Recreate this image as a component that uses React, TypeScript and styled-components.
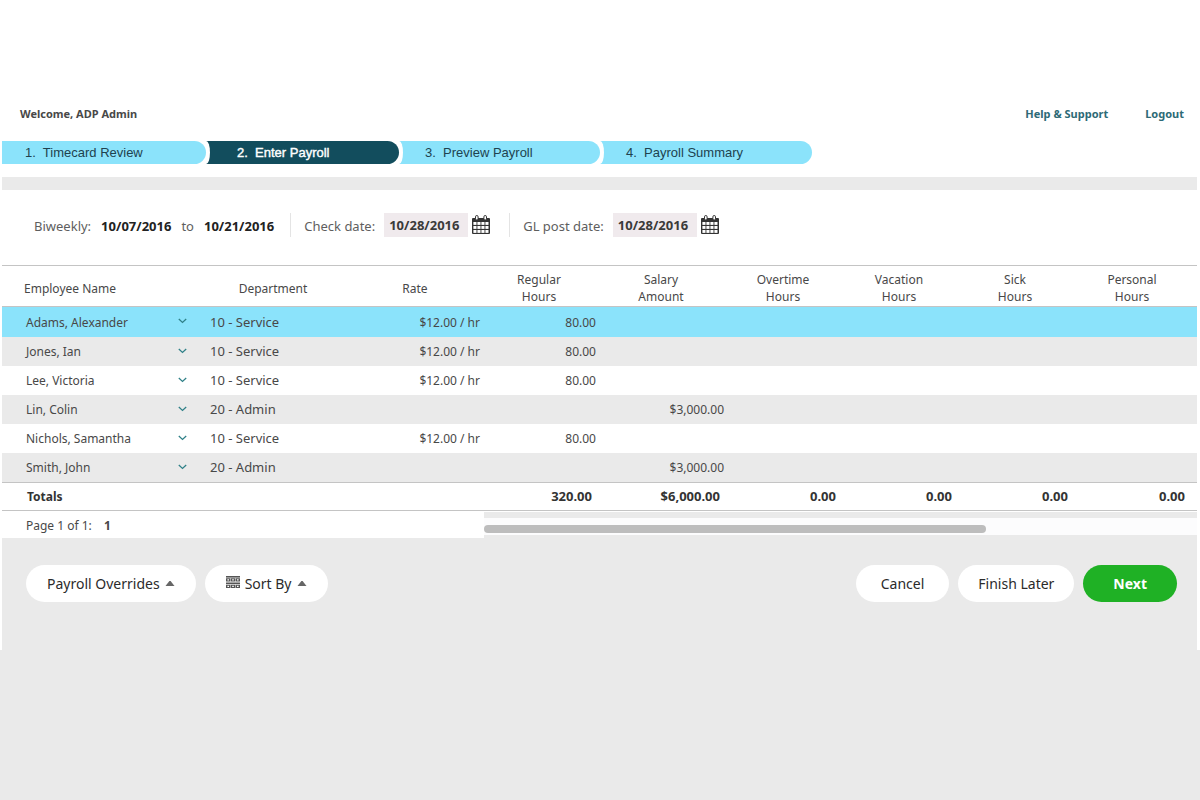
import React, { useState } from "react";
import styled, { createGlobalStyle } from "styled-components";

const color = {
  grey: "#eaeaea",
  cyan: "#8be3fb",
  navy: "#124d5d",
  line: "#c4c4c4",
  text: "#484848",
  link: "#2d6a76",
  green: "#1fb125",
};

const GlobalStyle = createGlobalStyle`
  * { box-sizing: border-box; }
  body {
    margin: 0;
    background: #fff;
    color: ${color.text};
    font-family: "Noto Sans", "Liberation Sans", sans-serif;
    font-size: 12px;
    line-height: 17px;
  }
  button, input { font-family: inherit; }
`;

const Page = styled.div`
  min-height: 100vh;
  display: flex;
  flex-direction: column;
  padding-top: 104px;
`;

const Shell = styled.div`
  margin: 0 3px 0 2px;
`;

const TopBar = styled.header`
  display: flex;
  justify-content: space-between;
  align-items: center;
  height: 19px;
  padding: 0 13px 0 18px;
  font-size: 11px;
  font-weight: 700;
`;

const TopLinks = styled.nav`
  display: flex;
  gap: 37px;
`;

const TopLink = styled.a`
  color: ${color.link};
  text-decoration: none;
`;

const Steps = styled.ol`
  display: flex;
  list-style: none;
  margin: 0;
  padding: 18px 0 13px;
`;

const Step = styled.li<{ $order: number; $width: number }>`
  position: relative;
  z-index: ${(p) => 5 - p.$order};
  width: ${(p) => p.$width + 4}px;
  margin-right: -4px;
  padding-right: 4px;
  border-radius: 0 4px 4px 0 / 0 12px 12px 0;
  background: #fff;
`;

const StepLabel = styled.span<{ $indent: number; $current: boolean }>`
  display: block;
  height: 23px;
  padding-left: ${(p) => p.$indent}px;
  border-radius: 0 12px 12px 0;
  background: ${(p) => (p.$current ? color.navy : color.cyan)};
  color: ${(p) => (p.$current ? "#fff" : "#20424f")};
  font-family: "Liberation Sans", Arial, sans-serif;
  font-size: 13px;
  line-height: 23px;
  white-space: pre;
  -webkit-text-stroke: ${(p) => (p.$current ? "0.4px #fff" : "0")};
`;

const Band = styled.div`
  height: 13px;
  background: ${color.grey};
`;

const DateBar = styled.section`
  display: flex;
  align-items: center;
  height: 75px;
  padding: 0 0 6px 32px;
  color: #5e5e5e;
  font-size: 13px;
`;

const Period = styled.div`
  display: flex;
  gap: 10px;
  padding: 4px 16px 0 0;
  align-items: baseline;
`;

const Strong = styled.strong`
  color: #222;
`;

const DateField = styled.div`
  display: flex;
  align-items: center;
  height: 24px;
  padding: 0 19px 0 14px;
  box-shadow: inset 1px 0 0 #e4e4e4;
`;

const DateLabel = styled.label`
  padding-top: 4px;
`;

const DateInput = styled.input`
  width: 84px;
  height: 24px;
  margin: 0 4px 0 9px;
  padding: 0 5px;
  border: 0;
  background: #f0eaed;
  color: #3a3a3a;
  font-size: 13px;
  font-weight: 700;
`;

const IconButton = styled.button`
  display: flex;
  padding: 0;
  border: 0;
  background: none;
  cursor: pointer;
`;

const Grid = styled.table`
  width: 100%;
  table-layout: fixed;
  border-collapse: separate;
  border-spacing: 0;
  border-top: 1px solid ${color.line};
`;

const HeadCell = styled.th<{ $align?: string; $end?: boolean }>`
  height: 41px;
  padding: 4px ${(p) => (p.$end ? 6 : 0)}px 0 ${(p) => (p.$align ? 22 : 0)}px;
  border-bottom: 1px solid ${color.line};
  font-weight: 400;
  text-align: ${(p) => p.$align || "center"};
`;

const Row = styled.tr<{ $selected: boolean }>`
  height: 29px;
  &:nth-child(even) { background: ${color.grey}; }
  ${(p) => p.$selected && `&& { background: ${color.cyan}; height: 30px; }`}
`;

const NameCell = styled.th`
  padding: 0 10px 0 24px;
  font-weight: 400;
  text-align: left;
`;

const NameLine = styled.div`
  display: flex;
  justify-content: space-between;
  align-items: center;
`;

const DeptCell = styled.td`
  padding: 0 0 0 13px;
  font-size: 13px;
`;

const NumCell = styled.td`
  padding: 0 1px 0 0;
  text-align: right;
`;

const TotalCell = styled.td<{ $end?: boolean }>`
  height: 29px;
  padding: 0 ${(p) => (p.$end ? 12 : 5)}px 0 0;
  border: solid ${color.line};
  border-width: 1px 0;
  text-align: right;
  font-size: 13px;
  font-weight: 700;
  color: #333;
`;

const TotalHead = styled(TotalCell).attrs({ as: "th" })`
  padding: 0 0 0 25px;
  text-align: left;
  font-size: 12px;
`;

const GridFoot = styled.div`
  display: flex;
  height: 27px;
  background: ${color.grey};
`;

const Pager = styled.div`
  width: 40.3%;
  padding: 6px 0 0 24px;
  background: #fff;
`;

const PageNumber = styled.strong`
  margin-left: 9px;
`;

const ScrollArea = styled.div`
  flex: 1;
  height: 24px;
  padding-top: 13px;
  border-top: 1px solid #fff;
  background: #fcfcfd;
  box-shadow: inset 0 6px 0 ${color.grey};
`;

const ScrollThumb = styled.div`
  width: 70.4%;
  height: 8px;
  border-radius: 4px;
  background: #bdbdbd;
`;

const Lower = styled.div`
  height: 112px;
  background: ${color.grey};
`;

const Actions = styled.div`
  display: flex;
  justify-content: space-between;
  padding: 27px 20px 0 24px;
`;

const Group = styled.div<{ $gap: number }>`
  display: flex;
  gap: ${(p) => p.$gap}px;
`;

const Pill = styled.button<{ $pad: number; $primary?: boolean }>`
  display: flex;
  align-items: center;
  gap: 5px;
  height: 37px;
  padding: 0 ${(p) => p.$pad}px;
  border: 0;
  border-radius: 19px;
  background: ${(p) => (p.$primary ? color.green : "#fff")};
  color: ${(p) => (p.$primary ? "#fff" : "#2b2b2b")};
  font-size: 14px;
  font-weight: ${(p) => (p.$primary ? 700 : 400)};
  white-space: nowrap;
  cursor: pointer;
`;

const Filler = styled.div`
  flex: 1;
  background: ${color.grey};
`;

const CalendarIcon = () => (
  <svg width="18" height="20" viewBox="0 0 18 20" aria-hidden="true">
    <rect x="0" y="3" width="18" height="16" rx="1" fill="#333" />
    <g fill="#fff">
      {[7, 11, 15].map((y) =>
        [1.4, 5.4, 9.4, 13.4].map((x) => (
          <rect key={`${x}-${y}`} x={x} y={y} width="3.1" height="2.9" />
        ))
      )}
    </g>
    <g fill="#fff" stroke="#333">
      <rect x="3.5" y="0.5" width="2.6" height="4.6" rx="1.3" />
      <rect x="11.9" y="0.5" width="2.6" height="4.6" rx="1.3" />
    </g>
  </svg>
);

const Chevron = () => (
  <svg width="9" height="8" viewBox="0 0 9 8" aria-hidden="true">
    <path d="M0.8 1 L4.5 4.4 L8.2 1" fill="none" stroke="#2f8088" strokeWidth="1.3" />
  </svg>
);

const Caret = () => (
  <svg width="10" height="8" viewBox="0 0 10 8" aria-hidden="true">
    <path d="M0.5 6 L4.4 1 H5.6 L9.5 6 Z" fill="#666" />
  </svg>
);

const SortIcon = () => (
  <svg width="14" height="16" viewBox="0 0 14 16" aria-hidden="true">
    <g fill="#555">
      {[0, 6.5].map((y) => (
        <React.Fragment key={y}>
          <rect x="0" y={y} width="14" height="1.6" />
          {[0, 4.8, 9.6].map((x) => (
            <path
              key={x}
              fillRule="evenodd"
              d={`M${x} ${y + 2.2}h4.4v3.4h-4.4z M${x + 1.4} ${y + 3.2}v1.3h1.6v-1.3z`}
            />
          ))}
        </React.Fragment>
      ))}
    </g>
  </svg>
);

const steps = [
  { label: "Timecard Review", width: 204, indent: 23 },
  { label: "Enter Payroll", width: 193, indent: 31 },
  { label: "Preview Payroll", width: 201, indent: 26 },
  { label: "Payroll Summary", width: 212, indent: 26 },
];

const columns = [
  { lines: ["Employee Name"], width: 195 },
  { lines: ["Department"], width: 152 },
  { lines: ["Rate"], width: 132 },
  { lines: ["Regular", "Hours"], width: 116 },
  { lines: ["Salary", "Amount"], width: 128 },
  { lines: ["Overtime", "Hours"], width: 116 },
  { lines: ["Vacation", "Hours"], width: 116 },
  { lines: ["Sick", "Hours"], width: 116 },
  { lines: ["Personal", "Hours"], width: 124 },
];

const employees = [
  { name: "Adams, Alexander", dept: "10 - Service", rate: "$12.00 / hr", hours: "80.00", salary: "" },
  { name: "Jones, Ian", dept: "10 - Service", rate: "$12.00 / hr", hours: "80.00", salary: "" },
  { name: "Lee, Victoria", dept: "10 - Service", rate: "$12.00 / hr", hours: "80.00", salary: "" },
  { name: "Lin, Colin", dept: "20 - Admin", rate: "", hours: "", salary: "$3,000.00" },
  { name: "Nichols, Samantha", dept: "10 - Service", rate: "$12.00 / hr", hours: "80.00", salary: "" },
  { name: "Smith, John", dept: "20 - Admin", rate: "", hours: "", salary: "$3,000.00" },
];

const totals = ["", "", "320.00", "$6,000.00", "0.00", "0.00", "0.00", "0.00"];

export default function App() {
  const [selected, setSelected] = useState(0);
  return (
    <Page>
      <GlobalStyle />
      <Shell>
        <TopBar>
          <span>Welcome, ADP Admin</span>
          <TopLinks>
            <TopLink href="#help">Help &amp; Support</TopLink>
            <TopLink href="#logout">Logout</TopLink>
          </TopLinks>
        </TopBar>
        <Steps>
          {steps.map((s, i) => (
            <Step key={s.label} $order={i + 1} $width={s.width}>
              <StepLabel $indent={s.indent} $current={i === 1}>
                {`${i + 1}.  ${s.label}`}
              </StepLabel>
            </Step>
          ))}
        </Steps>
        <Band />
        <DateBar>
          <Period>
            <span>Biweekly:</span>
            <Strong>10/07/2016</Strong>
            <span>to</span>
            <Strong>10/21/2016</Strong>
          </Period>
          <DateField>
            <DateLabel htmlFor="check-date">Check date:</DateLabel>
            <DateInput id="check-date" defaultValue="10/28/2016" />
            <IconButton type="button" aria-label="Pick check date"><CalendarIcon /></IconButton>
          </DateField>
          <DateField>
            <DateLabel htmlFor="post-date">GL post date:</DateLabel>
            <DateInput id="post-date" defaultValue="10/28/2016" />
            <IconButton type="button" aria-label="Pick GL post date"><CalendarIcon /></IconButton>
          </DateField>
        </DateBar>
        <Grid>
          <colgroup>
            {columns.map((c) => (
              <col key={c.lines.join()} width={c.width} />
            ))}
          </colgroup>
          <thead>
            <tr>
              {columns.map((c, i) => (
                <HeadCell
                  key={c.lines.join()}
                  scope="col"
                  $align={i === 0 ? "left" : undefined}
                  $end={i === columns.length - 1}
                >
                  {c.lines[0]}
                  {c.lines[1] && <><br />{c.lines[1]}</>}
                </HeadCell>
              ))}
            </tr>
          </thead>
          <tbody>
            {employees.map((e, i) => (
              <Row key={e.name} $selected={i === selected} onClick={() => setSelected(i)}>
                <NameCell scope="row">
                  <NameLine>
                    {e.name}
                    <IconButton type="button" aria-label={`Options for ${e.name}`}><Chevron /></IconButton>
                  </NameLine>
                </NameCell>
                <DeptCell>{e.dept}</DeptCell>
                <NumCell>{e.rate}</NumCell>
                <NumCell>{e.hours}</NumCell>
                <NumCell>{e.salary}</NumCell>
                <NumCell />
                <NumCell />
                <NumCell />
                <NumCell />
              </Row>
            ))}
          </tbody>
          <tfoot>
            <tr>
              <TotalHead scope="row">Totals</TotalHead>
              {totals.map((t, i) => (
                <TotalCell key={i} $end={i === totals.length - 1}>{t}</TotalCell>
              ))}
            </tr>
          </tfoot>
        </Grid>
        <GridFoot>
          <Pager>
            Page 1 of 1: <PageNumber>1</PageNumber>
          </Pager>
          <ScrollArea>
            <ScrollThumb />
          </ScrollArea>
        </GridFoot>
        <Lower>
          <Actions>
            <Group $gap={9}>
              <Pill type="button" $pad={21}>Payroll Overrides <Caret /></Pill>
              <Pill type="button" $pad={21}><SortIcon />Sort By <Caret /></Pill>
            </Group>
            <Group $gap={9}>
              <Pill type="button" $pad={25}>Cancel</Pill>
              <Pill type="button" $pad={20}>Finish Later</Pill>
              <Pill type="button" $pad={30} $primary>Next</Pill>
            </Group>
          </Actions>
        </Lower>
      </Shell>
      <Filler />
    </Page>
  );
}
